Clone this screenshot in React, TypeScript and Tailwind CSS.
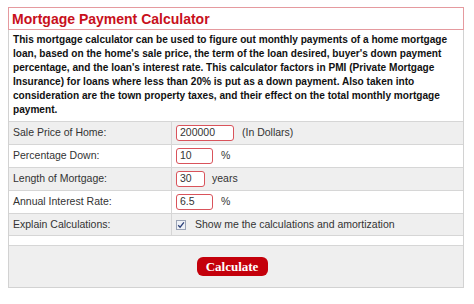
const rows = [
  { label: 'Sale Price of Home:', value: '200000', width: 'w-[58px]', after: '(In Dollars)', gap: 'ml-[8px]' },
  { label: 'Percentage Down:', value: '10', width: 'w-[37px]', after: '%', gap: 'ml-[8px]' },
  { label: 'Length of Mortgage:', value: '30', width: 'w-[29px]', after: 'years', gap: 'ml-[7px]' },
  { label: 'Annual Interest Rate:', value: '6.5', width: 'w-[37px]', after: '%', gap: 'ml-[8px]' },
]

const labelClass = 'w-[163px] shrink-0 border-r border-[#d6d6d6] pl-[4px] text-[10.5px] text-[#333]'

function CheckMark() {
  return (
    <span className="flex h-[10px] w-[10px] items-center justify-center border border-[#9aa3b5] bg-[#eef1f6]">
      <svg width="8" height="8" viewBox="0 0 8 8">
        <path d="M1.2 4.2 L3.1 6.2 L6.9 1.4" fill="none" stroke="#2b3f78" strokeWidth="1.3" />
      </svg>
    </span>
  )
}

export default function App() {
  return (
    <div className="h-[304px] w-[474px] bg-white font-['Liberation_Sans',Arial,sans-serif]">
      <div className="ml-[8px] w-[456px] pt-[7px]">
        <div className="flex h-[23px] items-center border border-[#e59a9f] pl-[3px]">
          <h1 className="text-[14px] font-bold leading-none text-[#c8101b]">Mortgage Payment Calculator</h1>
        </div>
        <div className="border-x border-b border-[#d2d2d2]">
          <p className="pb-[4px] pl-[4px] pr-[3px] pt-[3px] text-[10.1px] font-bold leading-[14px] text-[#111]">
            This mortgage calculator can be used to figure out monthly payments of a home mortgage loan, based on the
            home's sale price, the term of the loan desired, buyer's down payment percentage, and the loan's interest
            rate. This calculator factors in PMI (Private Mortgage Insurance) for loans where less than 20% is put as a
            down payment. Also taken into consideration are the town property taxes, and their effect on the total
            monthly mortgage payment.
          </p>
          {rows.map((row, i) => (
            <div
              key={row.label}
              className={`flex h-[23px] items-center border-t border-[#d6d6d6] ${i % 2 === 0 ? 'bg-[#efefef]' : 'bg-white'}`}
            >
              <div className={`${labelClass} flex h-full items-center`}>{row.label}</div>
              <div className="flex items-center pl-[4px] text-[10.5px] text-[#333]">
                <div
                  className={`${row.width} flex h-[16px] items-center rounded-[3px] border border-[#d9535b] bg-white pl-[3px] text-[10.5px] text-[#333]`}
                >
                  {row.value}
                </div>
                <span className={row.gap}>{row.after}</span>
              </div>
            </div>
          ))}
          <div className="flex h-[23px] items-center border-y border-[#d6d6d6] bg-[#efefef]">
            <div className={`${labelClass} flex h-full items-center`}>Explain Calculations:</div>
            <div className="flex items-center pl-[4px] text-[10.5px] text-[#333]">
              <CheckMark />
              <span className="ml-[9px]">Show me the calculations and amortization</span>
            </div>
          </div>
          <div className="h-[9px] bg-white" />
          <div className="flex h-[42px] items-center justify-center border-t border-[#d6d6d6] bg-[#efefef]">
            <button className="-ml-[8px] h-[19px] w-[71px] rounded-[6px] bg-[#c4000b] font-['Liberation_Serif',serif] text-[13px] font-bold leading-none text-white">
              Calculate
            </button>
          </div>
        </div>
      </div>
    </div>
  )
}
